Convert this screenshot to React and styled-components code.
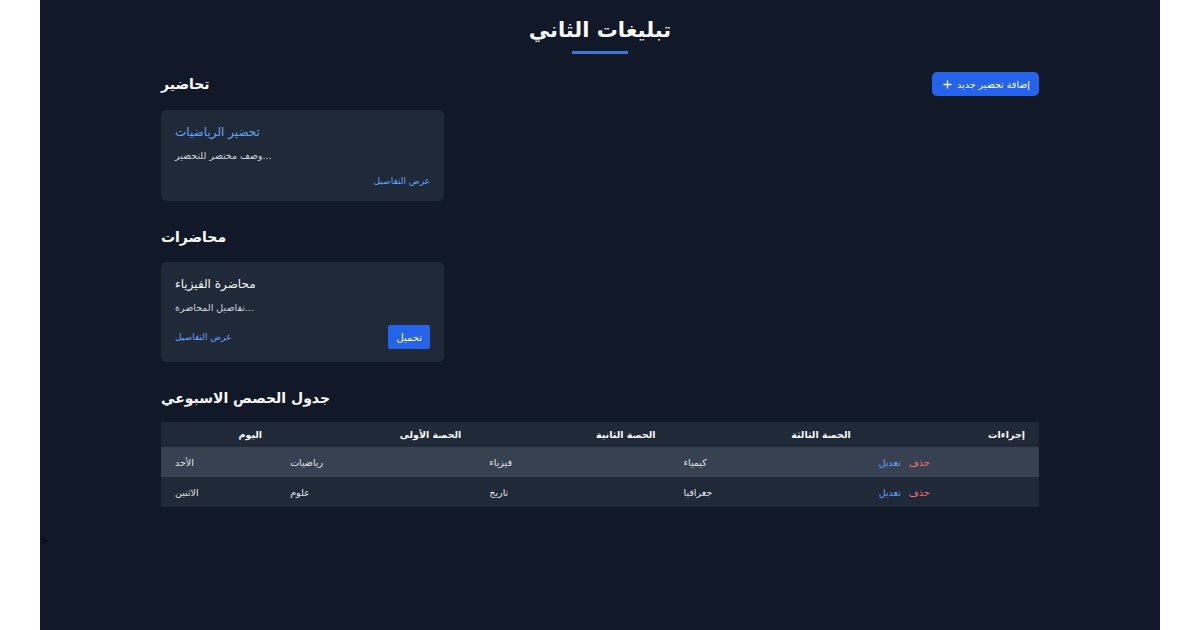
import React from 'react'
import styled, { createGlobalStyle } from 'styled-components'

const GlobalStyle = createGlobalStyle`
  html, body {
    margin: 0;
    padding: 0;
    background: #ffffff;
    font-family: "DejaVu Sans", sans-serif;
  }
`

const Page = styled.div`
  margin: 0 40px;
  min-height: 630px;
  background: #111827;
  padding-top: 16px;
  box-sizing: border-box;
`

const Inner = styled.div`
  max-width: 878px;
  margin: 0 auto;
`

const Title = styled.h1`
  margin: 0;
  text-align: center;
  font-size: 21px;
  line-height: 28px;
  font-weight: bold;
  color: #f9fafb;
`

const TitleLine = styled.div`
  width: 56px;
  height: 3px;
  margin: 7px auto 0;
  background: #3b78d8;
`

const Section = styled.section`
  margin-top: ${(p) => p.$top}px;
`

const SectionHead = styled.div`
  display: flex;
  align-items: center;
  justify-content: space-between;
  min-height: 20px;
  margin-bottom: ${(p) => p.$gap}px;
`

const Heading = styled.h2`
  margin: 0;
  font-size: 14px;
  line-height: 20px;
  font-weight: bold;
  color: #f9fafb;
`

const AddButton = styled.button`
  display: flex;
  align-items: center;
  gap: 5px;
  height: 24px;
  padding: 0 9px 0 11px;
  border: none;
  border-radius: 5px;
  background: #2563eb;
  color: #ffffff;
  font-family: inherit;
  font-size: 9.5px;
`

const Card = styled.div`
  width: 283px;
  box-sizing: border-box;
  padding: 14px 14px ${(p) => p.$bottom}px;
  background: #1f2937;
  border-radius: 5px;
`

const CardTitle = styled.div`
  font-size: 12px;
  line-height: 16px;
  color: ${(p) => (p.$accent ? '#60a5fa' : '#f3f4f6')};
`

const CardText = styled.div`
  margin-top: 9px;
  font-size: 9.5px;
  line-height: 14px;
  color: #d1d5db;
`

const CardFooter = styled.div`
  display: flex;
  align-items: center;
  justify-content: ${(p) => p.$justify};
  margin-top: ${(p) => p.$top}px;
`

const DetailsLink = styled.a`
  font-size: 9px;
  line-height: 12px;
  color: #60a5fa;
  text-decoration: none;
`

const DownloadButton = styled.button`
  height: 24px;
  padding: 0 8px;
  border: none;
  border-radius: 2px;
  background: #2563eb;
  color: #ffffff;
  font-family: inherit;
  font-size: 10px;
`

const Table = styled.table`
  width: 100%;
  border-collapse: collapse;
  table-layout: fixed;
  font-size: 9.5px;
`

const HeadCell = styled.th`
  height: 25px;
  padding: 0 14px;
  text-align: right;
  font-weight: bold;
  color: #f9fafb;
  background: #1f2937;
`

const Row = styled.tr`
  background: ${(p) => (p.$highlight ? '#374151' : '#1f2937')};
`

const Cell = styled.td`
  height: 30px;
  padding: 0 14px;
  text-align: left;
  color: #e5e7eb;
`

const Actions = styled.div`
  display: flex;
  gap: 8px;
`

const ActionLink = styled.a`
  color: ${(p) => (p.$danger ? '#f87171' : '#60a5fa')};
  text-decoration: none;
`

const Stray = styled.div`
  margin-top: 26px;
  font-size: 11px;
  line-height: 16px;
  color: #05070c;
`

const PlusIcon = () => (
  <svg width="9" height="9" viewBox="0 0 10 10" fill="none">
    <path d="M5 1v8M1 5h8" stroke="#ffffff" strokeWidth="1.5" strokeLinecap="round" />
  </svg>
)

const columns = [115, 199, 194, 195, 174]
const headers = ['اليوم', 'الحصة الأولى', 'الحصة الثانية', 'الحصة الثالثة', 'إجراءات']
const schedule = [
  { day: 'الأحد', lessons: ['رياضيات', 'فيزياء', 'كيمياء'] },
  { day: 'الاثنين', lessons: ['علوم', 'تاريخ', 'جغرافيا'] },
]

export default function App() {
  return (
    <>
      <GlobalStyle />
      <Page>
        <Inner>
          <Title>تبليغات الثاني</Title>
          <TitleLine />

          <Section $top={18}>
            <SectionHead $gap={14}>
              <Heading>تحاضير</Heading>
              <AddButton>
                <PlusIcon />
                <span>إضافة تحضير جديد</span>
              </AddButton>
            </SectionHead>
            <Card $bottom={14}>
              <CardTitle $accent>تحضير الرياضيات</CardTitle>
              <CardText>وصف مختصر للتحضير...</CardText>
              <CardFooter $justify="flex-end" $top={12}>
                <DetailsLink href="#">عرض التفاصيل</DetailsLink>
              </CardFooter>
            </Card>
          </Section>

          <Section $top={26}>
            <SectionHead $gap={15}>
              <Heading>محاضرات</Heading>
            </SectionHead>
            <Card $bottom={13}>
              <CardTitle>محاضرة الفيزياء</CardTitle>
              <CardText>تفاصيل المحاضرة...</CardText>
              <CardFooter $justify="space-between" $top={10}>
                <DetailsLink href="#">عرض التفاصيل</DetailsLink>
                <DownloadButton>تحميل</DownloadButton>
              </CardFooter>
            </Card>
          </Section>

          <Section $top={26}>
            <SectionHead $gap={14}>
              <Heading>جدول الحصص الاسبوعي</Heading>
            </SectionHead>
            <Table>
              <colgroup>
                {columns.map((w, i) => (
                  <col key={i} style={{ width: w }} />
                ))}
              </colgroup>
              <thead>
                <tr>
                  {headers.map((h) => (
                    <HeadCell key={h}>{h}</HeadCell>
                  ))}
                </tr>
              </thead>
              <tbody>
                {schedule.map((row, i) => (
                  <Row key={row.day} $highlight={i === 0}>
                    <Cell>{row.day}</Cell>
                    {row.lessons.map((l) => (
                      <Cell key={l}>{l}</Cell>
                    ))}
                    <Cell>
                      <Actions>
                        <ActionLink href="#">تعديل</ActionLink>
                        <ActionLink href="#" $danger>
                          حذف
                        </ActionLink>
                      </Actions>
                    </Cell>
                  </Row>
                ))}
              </tbody>
            </Table>
          </Section>
        </Inner>
        <Stray>&gt;</Stray>
      </Page>
    </>
  )
}
